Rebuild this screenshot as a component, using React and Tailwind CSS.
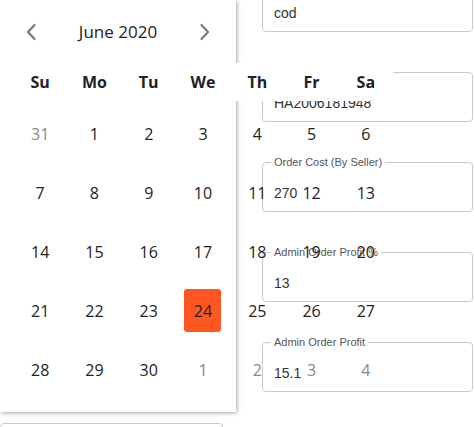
import React from "react";

const weeks = [
  [{ d: 31, out: true }, { d: 1 }, { d: 2 }, { d: 3 }, { d: 4 }, { d: 5 }, { d: 6 }],
  [{ d: 7 }, { d: 8 }, { d: 9 }, { d: 10 }, { d: 11 }, { d: 12 }, { d: 13 }],
  [{ d: 14 }, { d: 15 }, { d: 16 }, { d: 17 }, { d: 18 }, { d: 19 }, { d: 20 }],
  [{ d: 21 }, { d: 22 }, { d: 23 }, { d: 24, selected: true }, { d: 25 }, { d: 26 }, { d: 27 }],
  [{ d: 28 }, { d: 29 }, { d: 30 }, { d: 1, out: true }, { d: 2, out: true }, { d: 3, out: true }, { d: 4, out: true }],
];

const dayNames = ["Su", "Mo", "Tu", "We", "Th", "Fr", "Sa"];

function Field({ label, value }) {
  return (
    <div className="relative h-[50px] shrink-0 rounded-[4px] border border-[#c9c9c9]">
      {label && (
        <span className="absolute -top-[8px] left-[8px] bg-white px-[3px] text-[11px] leading-[14px] text-[#555]">
          {label}
        </span>
      )}
      <div className="pl-[11px] pt-[22px] text-[14px] leading-[16px] text-[#333]">{value}</div>
    </div>
  );
}

function Chevron({ dir }) {
  return (
    <svg width="12" height="18" viewBox="0 0 12 18" fill="none">
      <path
        d={dir === "left" ? "M9.5 2 L3 9 L9.5 16" : "M2.5 2 L9 9 L2.5 16"}
        stroke="#7a7a7a"
        strokeWidth="2.2"
        strokeLinecap="round"
        strokeLinejoin="round"
      />
    </svg>
  );
}

function Calendar() {
  return (
    <div
      className="absolute left-0 top-0 z-10 h-[412px] w-[236px] bg-white shadow-[1px_1px_4px_rgba(0,0,0,0.35)]"
      style={{ fontFamily: '"Open Sans", sans-serif' }}
    >
      <div className="flex h-[63px] items-center justify-between px-[25px]">
        <Chevron dir="left" />
        <span className="text-[17px] text-[#222]">June 2020</span>
        <Chevron dir="right" />
      </div>
      <div className="ml-[13px] grid h-[38px] w-[380px] grid-cols-7 items-center bg-white">
        {dayNames.map((n) => (
          <span key={n} className="text-center text-[16px] font-bold text-[#222]">
            {n}
          </span>
        ))}
      </div>
      <div className="ml-[13px] mt-[3px] w-[380px]">
        {weeks.map((week, i) => (
          <div key={i} className="grid h-[59px] grid-cols-7 items-center">
            {week.map((day, j) => (
              <div key={j} className="flex justify-center">
                {day.selected ? (
                  <span className="flex h-[43px] w-[37px] items-center justify-center rounded-[3px] bg-[#ff5722] text-[16px] text-[#222]">
                    {day.d}
                  </span>
                ) : (
                  <span className={`text-[16px] ${day.out ? "text-[#888]" : "text-[#222]"}`}>{day.d}</span>
                )}
              </div>
            ))}
          </div>
        ))}
      </div>
    </div>
  );
}

export default function App() {
  return (
    <div
      className="relative h-[427px] w-[474px] overflow-hidden bg-white"
      style={{ fontFamily: '"Liberation Sans", Arial, sans-serif' }}
    >
      <div className="flex gap-[39px]">
        <div className="flex w-[223px] flex-col pt-[423px]">
          <Field label="" value="" />
        </div>
        <div className="-mt-[18px] flex w-[211px] flex-col gap-[40px]">
          <Field label="Payment Method" value="cod" />
          <Field label="Order ID" value="HA2006181948" />
          <Field label="Order Cost (By Seller)" value="270" />
          <Field label="Admin Order Profit %" value="13" />
          <Field label="Admin Order Profit" value="15.1" />
          <Field label="Base Margin" value="" />
        </div>
      </div>
      <Calendar />
    </div>
  );
}
